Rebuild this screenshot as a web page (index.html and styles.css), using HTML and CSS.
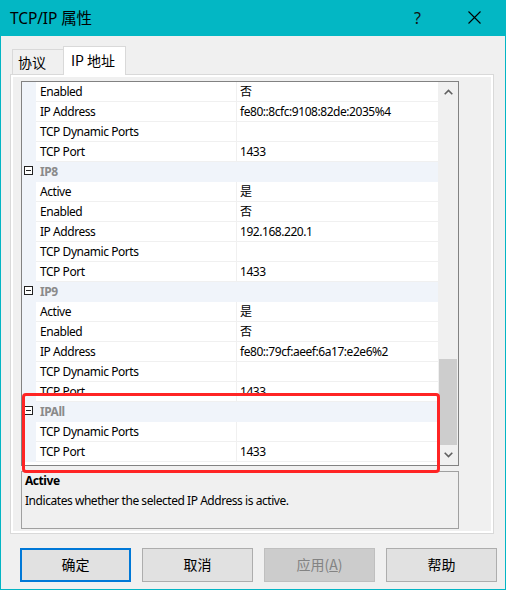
FILE: index.html
```html
<!DOCTYPE html>
<html lang="zh">
<head>
<meta charset="utf-8">
<title>TCP/IP 属性</title>
<link rel="stylesheet" href="styles.css">
</head>
<body>
<div class="window">
  <div class="titlebar">
    <span class="title">TCP/IP 属性</span>
    <span class="help">?</span>
    <svg class="close" width="13" height="13" viewBox="0 0 13 13"><path d="M0.5 0.5L12.5 12.5M12.5 0.5L0.5 12.5" stroke="#000" stroke-width="1.1" fill="none"/></svg>
  </div>
  <div class="tabs">
    <div class="tab">协议</div>
    <div class="tab active">IP 地址</div>
  </div>
  <div class="panel">
    <div class="grid">
      <div class="rows">
        <div class="row"><span class="margin"></span><span class="name">Enabled</span><span class="value">否</span></div>
        <div class="row"><span class="margin"></span><span class="name">IP Address</span><span class="value">fe80::8cfc:9108:82de:2035%4</span></div>
        <div class="row"><span class="margin"></span><span class="name">TCP Dynamic Ports</span><span class="value"></span></div>
        <div class="row"><span class="margin"></span><span class="name">TCP Port</span><span class="value">1433</span></div>
        <div class="cat"><span class="margin"><span class="toggle"></span></span><span class="catname">IP8</span></div>
        <div class="row"><span class="margin"></span><span class="name">Active</span><span class="value">是</span></div>
        <div class="row"><span class="margin"></span><span class="name">Enabled</span><span class="value">否</span></div>
        <div class="row"><span class="margin"></span><span class="name">IP Address</span><span class="value">192.168.220.1</span></div>
        <div class="row"><span class="margin"></span><span class="name">TCP Dynamic Ports</span><span class="value"></span></div>
        <div class="row"><span class="margin"></span><span class="name">TCP Port</span><span class="value">1433</span></div>
        <div class="cat"><span class="margin"><span class="toggle"></span></span><span class="catname">IP9</span></div>
        <div class="row"><span class="margin"></span><span class="name">Active</span><span class="value">是</span></div>
        <div class="row"><span class="margin"></span><span class="name">Enabled</span><span class="value">否</span></div>
        <div class="row"><span class="margin"></span><span class="name">IP Address</span><span class="value">fe80::79cf:aeef:6a17:e2e6%2</span></div>
        <div class="row"><span class="margin"></span><span class="name">TCP Dynamic Ports</span><span class="value"></span></div>
        <div class="row"><span class="margin"></span><span class="name">TCP Port</span><span class="value">1433</span></div>
        <div class="cat"><span class="margin"><span class="toggle"></span></span><span class="catname">IPAll</span></div>
        <div class="row"><span class="margin"></span><span class="name">TCP Dynamic Ports</span><span class="value"></span></div>
        <div class="row"><span class="margin"></span><span class="name">TCP Port</span><span class="value">1433</span></div>
      </div>
      <div class="scrollbar">
        <svg class="arrow" width="9" height="6" viewBox="0 0 9 6"><path d="M0.7 5.3L4.5 1.5L8.3 5.3" stroke="#606060" stroke-width="1.6" fill="none"/></svg>
        <div class="track"><div class="thumb"></div></div>
        <svg class="arrow" width="9" height="6" viewBox="0 0 9 6"><path d="M0.7 0.7L4.5 4.5L8.3 0.7" stroke="#606060" stroke-width="1.6" fill="none"/></svg>
      </div>
    </div>
    <div class="desc">
      <div class="desc-title">Active</div>
      <div class="desc-text">Indicates whether the selected IP Address is active.</div>
    </div>
  </div>
  <div class="buttons">
    <button class="btn default">确定</button>
    <button class="btn">取消</button>
    <button class="btn disabled">应用(<u>A</u>)</button>
    <button class="btn">帮助</button>
  </div>
  <div class="highlight"></div>
</div>
</body>
</html>
```

FILE: styles.css
```css
* { box-sizing: border-box; }
html, body { margin: 0; padding: 0; }
body {
  font-family: "Noto Sans", "Noto Sans CJK SC", sans-serif;
  font-size: 12px;
  letter-spacing: -0.45px;
  color: #000;
  background: #f0f0f0;
}
.window {
  position: relative;
  width: 506px;
  height: 590px;
  background: #f0f0f0;
  border-left: 1px solid #03b5c4;
  border-right: 1px solid #03b5c4;
  border-bottom: 1px solid #03b5c4;
}
.titlebar {
  height: 36px;
  margin: 0 -1px;
  background: #03b7c4;
  display: flex;
  align-items: center;
  padding-left: 10px;
  padding-bottom: 1px;
}
.title {
  font-family: "Noto Sans", "Noto Sans CJK SC", sans-serif;
  font-size: 15.5px;
  letter-spacing: -0.1px;
  flex: 1;
  color: #000;
}
.help {
  font-size: 16px;
  letter-spacing: 0;
  margin-right: 47px;
  color: #111;
}
.close { margin-right: 25px; }

.tabs {
  display: flex;
  align-items: flex-end;
  height: 38px;
  padding-left: 11px;
  position: relative;
  z-index: 1;
}
.tab {
  height: 25px;
  padding: 0 5px;
  width: 52px;
  border: 1px solid #d9d9d9;
  border-bottom: none;
  background: #f0f0f0;
  font-family: "Noto Sans CJK SC", sans-serif;
  font-size: 14px;
  letter-spacing: 0;
  line-height: 24px;
}
.tab.active {
  height: 29px;
  width: 63px;
  margin-left: -1px;
  margin-bottom: -1px;
  background: #fff;
  padding-left: 7px;
  line-height: 26px;
}
.panel {
  margin-left: 9px;
  width: 484px;
  height: 460px;
  border: 1px solid #d9d9d9;
  box-shadow: inset 2px 2px 0 #fff, inset -2px -2px 0 #fff;
  padding: 6px 0 0 10px;
}
.grid {
  width: 438px;
  height: 385px;
  border: 1px solid #828282;
  background: #fff;
  display: flex;
}
.rows {
  width: 416px;
  background: #fff;
  overflow: hidden;
}
.row, .cat {
  display: flex;
  height: 20px;
  line-height: 19px;
}
.margin {
  width: 14px;
  flex: none;
  background: #f0f4fa;
  position: relative;
}
.name {
  width: 201px;
  flex: none;
  padding-left: 4px;
  border-bottom: 1px solid #f0f0f0;
  border-right: 1px solid #f0f0f0;
  white-space: nowrap;
  overflow: hidden;
}
.value {
  flex: 1;
  padding-left: 3px;
  border-bottom: 1px solid #f0f0f0;
  white-space: nowrap;
}
.cat { background: #f0f4fa; }
.catname {
  padding-left: 4px;
  font-weight: bold;
  color: #8a8a8a;
}
.toggle {
  position: absolute;
  left: 2px;
  top: 4px;
  width: 9px;
  height: 9px;
  border: 1px solid #222;
  background: #fff;
}
.toggle::after {
  content: "";
  position: absolute;
  left: 1px;
  right: 1px;
  top: 3px;
  height: 1px;
  background: #222;
}
.scrollbar {
  width: 20px;
  background: #f0f0f0;
  display: flex;
  flex-direction: column;
  align-items: center;
}
.arrow { margin: 7px 0; flex: none; }
.track {
  flex: 1;
  width: 100%;
  position: relative;
}
.thumb {
  position: absolute;
  left: 1px;
  right: 1px;
  bottom: 0;
  height: 86px;
  background: #cdcdcd;
}
.desc {
  width: 438px;
  height: 58px;
  margin-top: 5px;
  border: 1px solid #a0a0a0;
  padding: 0 3px;
}
.desc-title { font-weight: bold; line-height: 17px; }
.desc-text { margin-top: 3px; line-height: 17px; }

.buttons {
  display: flex;
  gap: 11px;
  padding: 14px 0 0 19px;
}
.btn {
  width: 111px;
  height: 34px;
  background: #e1e1e1;
  border: 1px solid #adadad;
  font-family: "Noto Sans CJK SC", sans-serif;
  font-size: 14px;
  letter-spacing: 0;
  color: #000;
  padding: 0 0 3px;
}
.btn.default { border: 2px solid #0078d7; }
.btn.disabled {
  background: #cccccc;
  border-color: #bfbfbf;
  color: #838383;
}
.highlight {
  position: absolute;
  left: 21px;
  top: 393px;
  width: 418px;
  height: 80px;
  border: 3px solid #ff2424;
  border-radius: 4px;
}
```
